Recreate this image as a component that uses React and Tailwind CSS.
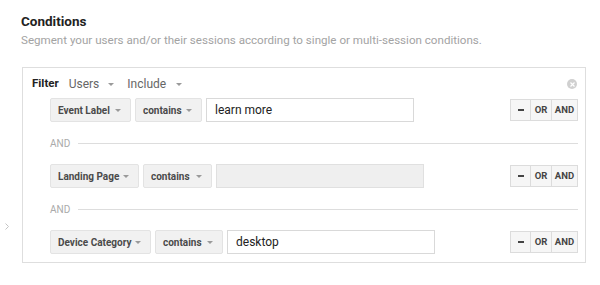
import React from "react";

const rows = [
  { field: "Event Label", fieldW: "w-[81px]", opW: "w-[67px]", value: "learn more", inputW: "w-[208px]", disabled: false },
  { field: "Landing Page", fieldW: "w-[89px]", opW: "w-[69px]", value: "", inputW: "w-[208px]", disabled: true },
  { field: "Device Category", fieldW: "w-[101px]", opW: "w-[68px]", value: "desktop", inputW: "w-[208px]", disabled: false },
];

const Caret = () => (
  <svg width="6" height="3" viewBox="0 0 6 3" className="shrink-0">
    <path d="M0 0h6L3 3z" fill="#9a9a9a" />
  </svg>
);

const Dropdown = ({ label, width }) => (
  <div
    className={`${width} h-full flex items-center justify-between pl-[7px] pr-[9px] bg-[#f1f1f1] border border-[#e3e3e3] rounded-[2px] text-[10px] font-bold text-[#4a4a4a]`}
  >
    <span>{label}</span>
    <Caret />
  </div>
);

const Actions = () => (
  <div className="ml-auto flex h-[22px] border border-[#dcdcdc] bg-[#f6f6f6] text-[9.5px] font-bold text-[#444]">
    <div className="w-[20px] flex items-center justify-center border-r border-[#dcdcdc]">
      <span className="block w-[6px] h-[2px] bg-[#444]"></span>
    </div>
    <div className="w-[21px] flex items-center justify-center border-r border-[#dcdcdc]">OR</div>
    <div className="w-[25px] flex items-center justify-center">AND</div>
  </div>
);

const AndSep = () => (
  <div className="h-[42px] flex items-center gap-[8px]">
    <span className="text-[10px] text-[#aaa]">AND</span>
    <div className="flex-1 h-px bg-[#ddd]"></div>
  </div>
);

export default function App() {
  return (
    <div className="w-[600px] h-[285px] bg-white relative font-['Roboto',sans-serif]">
      <div className="pl-[21px] pt-[13px]">
        <h2 className="text-[13.5px] font-bold text-[#222] leading-[16px]">Conditions</h2>
        <p className="text-[11.6px] text-[#a3a3a3] leading-[16px] mt-[3px]">
          Segment your users and/or their sessions according to single or multi-session conditions.
        </p>
      </div>

      <svg className="absolute left-[5px] top-[223px]" width="4" height="7" viewBox="0 0 4 7">
        <path d="M0.5 0.5l3 3-3 3" fill="none" stroke="#c4c4c4" strokeWidth="1" />
      </svg>

      <div className="ml-[22px] mt-[19px] w-[564px] border border-[#dedede] pb-[8px]">
        <div className="flex items-center h-[30px] pt-[2px] pl-[9px] pr-[8px] text-[12px]">
          <span className="font-bold text-[11.5px] text-[#222]">Filter</span>
          <span className="ml-[10px] text-[#666]">Users</span>
          <span className="ml-[9px]"><Caret /></span>
          <span className="ml-[13px] text-[#666]">Include</span>
          <span className="ml-[10px]"><Caret /></span>
          <span className="ml-auto w-[10px] h-[10px] rounded-full bg-[#d0d0d0] flex items-center justify-center">
            <svg width="5" height="5" viewBox="0 0 5 5">
              <path d="M0.5 0.5l4 4M4.5 0.5l-4 4" stroke="#fff" strokeWidth="1.2" />
            </svg>
          </span>
        </div>

        <div className="pl-[27px] pr-[7px]">
          {rows.map((r, i) => (
            <div key={i}>
              {i > 0 && <AndSep />}
              <div className="flex items-center h-[24px]">
                <div className="flex h-full gap-[4px]">
                  <Dropdown label={r.field} width={r.fieldW} />
                  <Dropdown label="contains" width={r.opW} />
                  <div
                    className={`${r.inputW} h-full flex items-center px-[8px] border ${
                      r.disabled ? "bg-[#efefef] border-[#e0e0e0]" : "bg-white border-[#d9d9d9]"
                    } text-[12px] text-[#222]`}
                  >
                    {r.value}
                  </div>
                </div>
                <Actions />
              </div>
            </div>
          ))}
        </div>
      </div>
    </div>
  );
}
